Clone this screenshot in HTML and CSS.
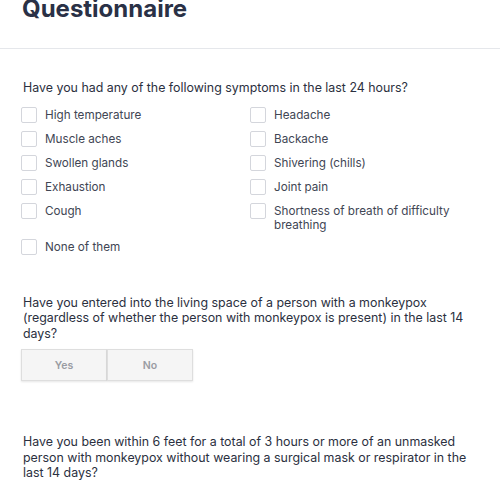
FILE: index.html
```html
<!DOCTYPE html>
<html lang="en">
<head>
    <meta charset="UTF-8">
    <meta name="viewport" content="width=device-width, initial-scale=1.0">
    <title>Questionnaire</title>
    <link rel="stylesheet" href="styles.css">
</head>
<body>
    <div class="header">
        <h1>Questionnaire</h1>
    </div>

    <div class="content">
        <div class="question">
            <p class="question-text">Have you had any of the following symptoms in the last 24 hours?</p>
            <div class="options">
                <label class="option"><span class="box"></span><span class="label">High temperature</span></label>
                <label class="option"><span class="box"></span><span class="label">Headache</span></label>
                <label class="option"><span class="box"></span><span class="label">Muscle aches</span></label>
                <label class="option"><span class="box"></span><span class="label">Backache</span></label>
                <label class="option"><span class="box"></span><span class="label">Swollen glands</span></label>
                <label class="option"><span class="box"></span><span class="label">Shivering (chills)</span></label>
                <label class="option"><span class="box"></span><span class="label">Exhaustion</span></label>
                <label class="option"><span class="box"></span><span class="label">Joint pain</span></label>
                <label class="option"><span class="box"></span><span class="label">Cough</span></label>
                <label class="option"><span class="box"></span><span class="label">Shortness of breath of difficulty breathing</span></label>
                <label class="option"><span class="box"></span><span class="label">None of them</span></label>
            </div>
        </div>

        <div class="question">
            <p class="question-text">Have you entered into the living space of a person with a monkeypox (regardless of whether the person with monkeypox is present) in the last 14 days?</p>
            <div class="choice">
                <button class="choice-btn">Yes</button>
                <button class="choice-btn">No</button>
            </div>
        </div>

        <div class="question">
            <p class="question-text">Have you been within 6 feet for a total of 3 hours or more of an unmasked person with monkeypox without wearing a surgical mask or respirator in the last 14 days?</p>
        </div>
    </div>
</body>
</html>
```

FILE: styles.css
```css
* {
    margin: 0;
    padding: 0;
    box-sizing: border-box;
}

body {
    font-family: Inter, 'Noto Sans', sans-serif;
    background: #fff;
    color: #2b3040;
}

.header {
    padding: 0 22px 25px;
    border-bottom: 1px solid #e5e7eb;
}

.header h1 {
    margin-top: -6px;
    font-size: 24px;
    font-weight: 700;
    line-height: 29px;
    color: #2a3146;
}

.content {
    padding: 31px 21px 0;
}

.question {
    margin-bottom: 40px;
}

.question:nth-child(2) {
    margin-bottom: 53px;
}

.question-text {
    font-size: 12.4px;
    line-height: 15.5px;
    color: #2b3040;
    padding-left: 2px;
}

.options {
    display: grid;
    grid-template-columns: 1fr 1fr;
    row-gap: 8px;
    margin-top: 11px;
}

.option {
    display: flex;
    align-items: flex-start;
    gap: 8px;
    font-size: 11.7px;
    line-height: 14px;
    color: #414654;
}

.option:last-child {
    margin-top: -1px;
}

.box {
    flex: none;
    width: 16px;
    height: 16px;
    border: 1px solid #d4d6dc;
    border-radius: 2px;
    background: #fff;
}

.label {
    padding-top: 1px;
    padding-right: 20px;
}

.choice {
    display: flex;
    margin-top: 8px;
}

.choice-btn {
    width: 86px;
    height: 32px;
    background: #f5f5f5;
    border: 1px solid #dedede;
    box-shadow: 0 1px 2px rgba(0, 0, 0, 0.1);
    font-family: Inter, sans-serif;
    font-size: 10.5px;
    font-weight: 600;
    color: #9a9ca3;
}
```
